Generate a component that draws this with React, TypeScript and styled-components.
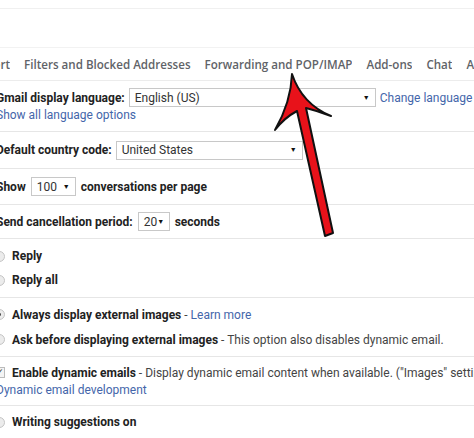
import React from "react";
import styled, { createGlobalStyle } from "styled-components";

const GlobalStyle = createGlobalStyle`
  html, body {
    margin: 0;
    padding: 0;
    background: #fff;
    overflow: hidden;
  }
  body {
    font-family: Roboto, "Liberation Sans", Arial, sans-serif;
    color: #222;
  }
`;

const Page = styled.div`
  position: relative;
  width: 474px;
  height: 438px;
  overflow: hidden;
  background: #fff;
`;

const TopStrip = styled.div`
  height: 8px;
  border-bottom: 1px solid #f0f0f0;
`;

const Blank = styled.div`
  height: 38px;
  border-bottom: 1px solid #f2f2f2;
`;

const Tabs = styled.div`
  display: flex;
  align-items: center;
  gap: 14px;
  height: 32px;
  border-bottom: 1px solid #ececec;
  white-space: nowrap;
`;

const Tab = styled.div<{ $clip?: number }>`
  display: flex;
  justify-content: flex-end;
  flex: none;
  overflow: hidden;
  font-family: "Open Sans", Roboto, sans-serif;
  font-size: 11.6px;
  font-weight: 600;
  color: #5f6368;
  ${(p) => (p.$clip ? `width: ${p.$clip}px;` : "")}
`;

const Section = styled.div<{ $h: number; $gap?: number }>`
  display: flex;
  flex-direction: column;
  justify-content: center;
  gap: ${(p) => p.$gap ?? 0}px;
  height: ${(p) => p.$h}px;
  margin-left: -4px;
  border-bottom: 1px solid #e6e6e6;
  font-size: 12px;
  white-space: nowrap;
`;

const Line = styled.div<{ $gap?: number }>`
  display: flex;
  align-items: center;
  gap: ${(p) => p.$gap ?? 4}px;
  height: 17px;
`;

const Label = styled.span`
  font-weight: 700;
  color: #222;
`;

const Plain = styled.span`
  color: #444;
`;

const Link = styled.span`
  color: #4466aa;
`;

const Select = styled.div<{ $w: number }>`
  display: flex;
  align-items: center;
  justify-content: space-between;
  box-sizing: border-box;
  width: ${(p) => p.$w}px;
  height: 19px;
  padding: 0 5px 0 5px;
  border: 1px solid #c8c8c8;
  background: #fff;
  color: #333;
  font-size: 12px;
`;

const Caret = styled.span`
  font-size: 7px;
  color: #111;
`;

const Radio = styled.span<{ $on?: boolean }>`
  position: relative;
  box-sizing: border-box;
  width: 11px;
  height: 11px;
  border-radius: 50%;
  border: 1px solid #c4c4c4;
  background: #ececec;
  margin-left: -2px;
  margin-right: 7px;
  flex: none;
  ${(p) =>
    p.$on
      ? `&::after{content:"";position:absolute;left:3px;top:3px;width:3px;height:3px;border-radius:50%;background:#444;}`
      : ""}
`;

const Check = styled.span`
  box-sizing: border-box;
  width: 11px;
  height: 11px;
  border: 1px solid #bbb;
  background: #f4f4f4;
  margin-left: -2px;
  margin-right: 7px;
  flex: none;
  display: flex;
  align-items: center;
  justify-content: center;
  font-size: 9px;
  line-height: 1;
  color: #222;
`;

const Overlay = styled.svg`
  position: absolute;
  left: 0;
  top: 0;
  pointer-events: none;
`;

const Arrow = () => (
  <Overlay width="474" height="438" viewBox="0 0 474 438">
    <path
      d="M292 74 Q302 104 331 116 Q318 111 306 108 L333 233 L325 236 L297 111 Q284 118 275 130 Q291 102 292 74 Z"
      fill="#e8121a"
      stroke="#111"
      strokeWidth="2"
      strokeLinejoin="round"
    />
  </Overlay>
);

const App = () => {
  return (
    <Page>
      <GlobalStyle />
      <TopStrip />
      <Blank />
      <Tabs>
        <Tab $clip={10}>Accounts and Import</Tab>
        <Tab>Filters and Blocked Addresses</Tab>
        <Tab>Forwarding and POP/IMAP</Tab>
        <Tab>Add-ons</Tab>
        <Tab>Chat</Tab>
        <Tab>Advanced</Tab>
      </Tabs>

      <Section $h={50}>
        <Line>
          <Label>Gmail display language:</Label>
          <Select $w={247}>
            English (US)
            <Caret>▼</Caret>
          </Select>
          <Link>Change language</Link>
        </Line>
        <Line>
          <Link>Show all language options</Link>
        </Line>
      </Section>

      <Section $h={36}>
        <Line>
          <Label>Default country code:</Label>
          <Select $w={187}>
            United States
            <Caret>▼</Caret>
          </Select>
        </Line>
      </Section>

      <Section $h={35}>
        <Line $gap={5}>
          <Label>Show</Label>
          <Select $w={45}>
            100
            <Caret>▼</Caret>
          </Select>
          <Label>conversations per page</Label>
        </Line>
      </Section>

      <Section $h={33}>
        <Line $gap={5}>
          <Label>Send cancellation period:</Label>
          <Select $w={32}>
            20
            <Caret>▼</Caret>
          </Select>
          <Label>seconds</Label>
        </Line>
      </Section>

      <Section $h={58} $gap={7}>
        <Line $gap={0}>
          <Radio />
          <Label>Reply</Label>
        </Line>
        <Line $gap={0}>
          <Radio />
          <Label>Reply all</Label>
        </Line>
      </Section>

      <Section $h={58} $gap={8}>
        <Line $gap={0}>
          <Radio $on />
          <Label>Always display external images</Label>
          <Plain>&nbsp;-&nbsp;</Plain>
          <Link>Learn more</Link>
        </Line>
        <Line $gap={0}>
          <Radio />
          <Label>Ask before displaying external images</Label>
          <Plain>&nbsp;- This option also disables dynamic email.</Plain>
        </Line>
      </Section>

      <Section $h={48}>
        <Line $gap={0}>
          <Check>✓</Check>
          <Label>Enable dynamic emails</Label>
          <Plain>
            &nbsp;- Display dynamic email content when available. ("Images" settings)
          </Plain>
        </Line>
        <Line>
          <Link>Dynamic email development</Link>
        </Line>
      </Section>

      <Section $h={32}>
        <Line $gap={0}>
          <Radio />
          <Label>Writing suggestions on</Label>
        </Line>
      </Section>

      <Arrow />
    </Page>
  );
};

export default App;
